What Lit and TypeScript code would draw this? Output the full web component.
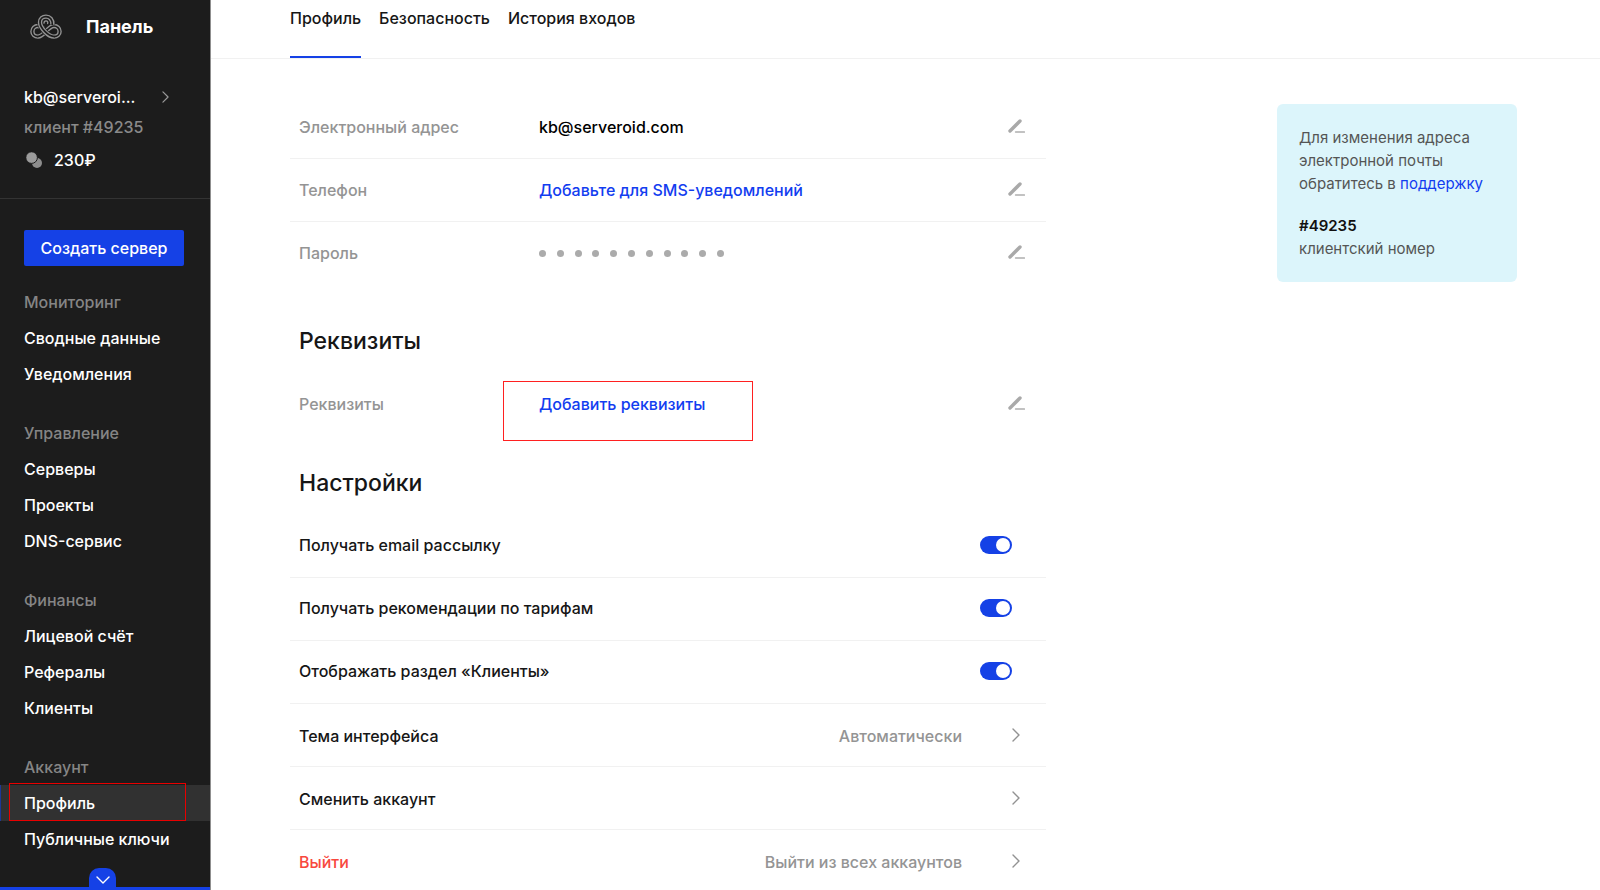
import { LitElement, html, css } from "lit";
import { customElement, state } from "lit/decorators.js";

interface NavGroup {
  title: string;
  items: string[];
}

const NAV: NavGroup[] = [
  { title: "Мониторинг", items: ["Сводные данные", "Уведомления"] },
  { title: "Управление", items: ["Серверы", "Проекты", "DNS-сервис"] },
  { title: "Финансы", items: ["Лицевой счёт", "Рефералы", "Клиенты"] },
  { title: "Аккаунт", items: ["Профиль", "Публичные ключи"] },
];

// A looped ribbon: every strand is a wide grey stroke with a dark core,
// so it reads as two parallel lines.
const logo = html`<svg class="logo" viewBox="0 0 32 25" aria-hidden="true" fill="none">
  <path d="M13.2 14.6 C11.8 12.8 10 12 8 12 C4.8 12 2.4 14.4 2.4 17.4 C2.4 20.4 4.8 22.6 8 22.6" stroke="#939393" stroke-width="4.4" />
  <path d="M13.8 15.2 C11.8 12.8 10 12 8 12 C4.8 12 2.4 14.4 2.4 17.4 C2.4 20.4 4.8 22.6 8 22.6" stroke="#1c1c1c" stroke-width="1.7" />
  <path d="M8 22.6 C14.4 22.6 17.6 12 24 12 C27.2 12 29.6 14.4 29.6 17.4 C29.6 20.4 27.2 22.6 24 22.6" stroke="#939393" stroke-width="4.4" />
  <path d="M7.6 22.6 C14.4 22.6 17.6 12 24 12 C27.2 12 29.6 14.4 29.6 17.4 C29.6 20.4 27.2 22.6 24 22.6" stroke="#1c1c1c" stroke-width="1.7" />
  <path d="M22.4 10.6 C22.8 5.6 19.8 2.6 16 2.6 C12.6 2.6 10 5 10 8.2 C10 13.6 18 22.6 24 22.6" stroke="#1c1c1c" stroke-width="5.6" />
  <path d="M22.4 10.6 C22.8 5.6 19.8 2.6 16 2.6 C12.6 2.6 10 5 10 8.2 C10 13.6 18 22.6 24 22.6" stroke="#939393" stroke-width="4.4" />
  <path d="M22.3 11 C22.8 5.6 19.8 2.6 16 2.6 C12.6 2.6 10 5 10 8.2 C10 13.6 18 22.6 24.6 22.6" stroke="#1c1c1c" stroke-width="1.7" />
  <path d="M14 9.2 C14 7.6 14.8 6.8 16 6.8 C17.4 6.8 18.2 8 17.6 9.6" stroke="#939393" stroke-width="1.3" stroke-linecap="round" />
</svg>`;

const chevron = html`<svg class="chevron" viewBox="0 0 8 14" aria-hidden="true">
  <path d="M1 1 L7 7 L1 13" fill="none" stroke="currentColor" stroke-width="1.4" stroke-linecap="round" stroke-linejoin="round" />
</svg>`;

const pencil = html`<svg class="pencil" viewBox="0 0 17 14" aria-hidden="true">
  <path d="M2 12 L12 2" fill="none" stroke="#a9a9a9" stroke-width="3.4" stroke-linecap="round" />
  <path d="M7.6 13 H16.4" fill="none" stroke="#aeaeae" stroke-width="1.6" stroke-linecap="round" />
</svg>`;

@customElement("app-sidebar")
export class AppSidebar extends LitElement {
  static styles = css`
    :host {
      display: block;
      position: relative;
      box-sizing: border-box;
      width: 211px;
      flex: none;
      overflow: hidden;
      background: #1c1c1c;
      border-right: 1px solid #8f8f8f;
      color: #fff;
      font-weight: 500;
      line-height: 24px;
    }
    a { color: inherit; text-decoration: none; }
    .brand {
      display: flex;
      align-items: center;
      gap: 24px;
      padding: 14px 0 0 30px;
      font-size: 18px;
      font-weight: 700;
    }
    .logo { width: 32px; height: 25px; }
    .account { padding: 46px 24px 26px; border-bottom: 1px solid #333; }
    .user { display: flex; align-items: center; height: 24px; }
    .name { flex: 1; white-space: nowrap; }
    .chevron { width: 7px; height: 12px; margin-right: 17px; color: #9a9a9a; }
    .client { padding-top: 6px; color: #8a8a8a; }
    .balance { display: flex; align-items: center; gap: 12px; padding: 9px 0 0 2px; }
    .coins { width: 16px; height: 16px; }
    .create {
      display: block;
      width: 160px;
      height: 36px;
      margin: 31px 0 24px 24px;
      padding: 0;
      border: 0;
      border-radius: 2px;
      background: #1541e6;
      color: #fff;
      font: inherit;
      cursor: pointer;
    }
    .group { padding-bottom: 29px; }
    .title { margin: 0 0 6px; padding-left: 24px; font-size: 16px; font-weight: 500; color: #858585; }
    .items { margin: 0; padding: 0; list-style: none; }
    .item { position: relative; }
    .link { display: block; padding: 6px 0 6px 23px; border-left: 1px solid transparent; }
    .current { background: #313131; border-left-color: #1d3797; }
    .mark {
      position: absolute;
      inset: -2px 24px 0 9px;
      border: 1px solid #e80000;
      pointer-events: none;
    }
    .more {
      position: absolute;
      inset: auto 0 0 0;
      display: flex;
      justify-content: center;
      padding-right: 5px;
      border-bottom: 3px solid #1541e6;
    }
    .down {
      display: grid;
      place-items: center;
      width: 27px;
      height: 19px;
      padding: 4px 0 0;
      border: 0;
      border-radius: 10px 10px 0 0;
      background: #1541e6;
      cursor: pointer;
    }
    .arrow { width: 14px; height: 8px; }
  `;

  render() {
    return html`
      <div class="brand">${logo}<span>Панель</span></div>
      <div class="account">
        <a class="user" href="#account"><span class="name">kb@serveroi...</span>${chevron}</a>
        <div class="client">клиент #49235</div>
        <div class="balance">
          <svg class="coins" viewBox="0 0 16 16" aria-hidden="true">
            <circle cx="11" cy="11" r="5" fill="#8d8d8d" />
            <circle cx="5.6" cy="5.6" r="5.8" fill="#9b9b9b" stroke="#1c1c1c" stroke-width="1" />
          </svg>
          <span>230₽</span>
        </div>
      </div>
      <button class="create" type="button">Создать сервер</button>
      <nav>
        ${NAV.map(
          (g) => html`<section class="group">
            <h2 class="title">${g.title}</h2>
            <ul class="items">
              ${g.items.map((name) => {
                const current = name === "Профиль";
                return html`<li class="item">
                  <a class="link ${current ? "current" : ""}" href="#nav">${name}</a>
                  ${current ? html`<span class="mark"></span>` : ""}
                </li>`;
              })}
            </ul>
          </section>`
        )}
      </nav>
      <div class="more">
        <button class="down" type="button" aria-label="Ещё">
          <svg class="arrow" viewBox="0 0 14 8" aria-hidden="true">
            <path d="M1 1 L7 7 L13 1" fill="none" stroke="#fff" stroke-width="1.4" stroke-linecap="round" stroke-linejoin="round" />
          </svg>
        </button>
      </div>
    `;
  }
}

@customElement("app-root")
export class AppRoot extends LitElement {
  @state() private settings = [
    { id: "mail", label: "Получать email рассылку", on: true },
    { id: "tips", label: "Получать рекомендации по тарифам", on: true },
    { id: "clients", label: "Отображать раздел «Клиенты»", on: true },
  ];

  static styles = css`
    :host {
      display: flex;
      height: 100vh;
      overflow: hidden;
      background: #fff;
      color: #161616;
      font: 500 16px/24px Inter, "Open Sans", sans-serif;
    }
    a { color: #123df0; text-decoration: none; }
    .page { flex: 1; min-width: 0; overflow: hidden; }
    .tabs {
      display: flex;
      gap: 18px;
      padding-left: 79px;
      border-bottom: 1px solid #f1f1f1;
    }
    .tab { padding: 6px 0 26px; border-bottom: 2px solid transparent; color: #161616; }
    .active { border-bottom-color: #1541e6; }
    .body {
      display: flex;
      justify-content: space-between;
      align-items: flex-start;
      gap: 40px;
      padding: 37px 83px 0 79px;
    }
    .column { flex: 0 1 756px; min-width: 0; }
    .profile { margin-bottom: 43px; }
    .details { margin-bottom: 34px; }
    .heading { margin: 0 0 18px; padding-left: 9px; font-size: 23px; line-height: 28px; font-weight: 500; }
    .row {
      position: relative;
      display: flex;
      align-items: center;
      box-sizing: border-box;
      height: 63px;
      padding: 0 21px 0 9px;
      border-bottom: 1px solid #f1f1f1;
      color: #161616;
    }
    .row:last-child { height: 62px; border-bottom: 0; }
    .key { width: 240px; color: #949494; }
    .value { flex: 1; color: #000; }
    .dots { display: flex; justify-content: space-between; width: 185px; margin-right: auto; }
    .dot { width: 7px; height: 7px; border-radius: 50%; background: #ababab; }
    .edit { display: flex; padding: 0 0 3px; border: 0; background: none; cursor: pointer; }
    .pencil { width: 17px; height: 14px; }
    .mark {
      position: absolute;
      inset: 8px 293px -6px 213px;
      border: 1px solid #ff2020;
      pointer-events: none;
    }
    .setting { padding: 0 34px 2px 9px; }
    .name { flex: 1; }
    .toggle {
      appearance: none;
      width: 32px;
      height: 18px;
      margin: 0;
      padding: 2px;
      border-radius: 9px;
      background: #c4c4c4;
      cursor: pointer;
    }
    .toggle::before {
      content: "";
      display: block;
      width: 14px;
      height: 14px;
      border-radius: 50%;
      background: #fff;
    }
    .toggle:checked { background: #1541e6; }
    .toggle:checked::before { margin-left: auto; }
    .action { padding: 2px 26px 0 9px; }
    .hint { margin-right: 50px; color: #949494; }
    .chevron { width: 8px; height: 14px; margin-bottom: 2px; color: #929292; }
    .danger { color: #f8483d; }
    .card {
      box-sizing: border-box;
      flex: none;
      width: 240px;
      margin-top: 8px;
      padding: 22px;
      border-radius: 6px;
      background: #dcf5fb;
      color: #555;
      font-size: 15px;
      line-height: 23px;
      font-weight: 400;
    }
    .note { margin: 0 0 19px; }
    .number { display: block; color: #111; font-weight: 600; }
  `;

  private flip(id: string) {
    this.settings = this.settings.map((s) => (s.id === id ? { ...s, on: !s.on } : s));
  }

  private edit(label: string) {
    return html`<button class="edit" type="button" aria-label=${"Изменить: " + label}>${pencil}</button>`;
  }

  render() {
    return html`
      <app-sidebar></app-sidebar>
      <main class="page">
        <nav class="tabs">
          <a class="tab active" href="#profile">Профиль</a>
          <a class="tab" href="#security">Безопасность</a>
          <a class="tab" href="#history">История входов</a>
        </nav>
        <div class="body">
          <div class="column">
            <section class="profile">
              <div class="row">
                <span class="key">Электронный адрес</span>
                <span class="value">kb@serveroid.com</span>
                ${this.edit("Электронный адрес")}
              </div>
              <div class="row">
                <span class="key">Телефон</span>
                <span class="value"><a href="#phone">Добавьте для SMS-уведомлений</a></span>
                ${this.edit("Телефон")}
              </div>
              <div class="row">
                <span class="key">Пароль</span>
                <span class="dots">${Array.from({ length: 11 }, () => html`<i class="dot"></i>`)}</span>
                ${this.edit("Пароль")}
              </div>
            </section>

            <h2 class="heading">Реквизиты</h2>
            <section class="details">
              <div class="row">
                <span class="key">Реквизиты</span>
                <span class="value"><a href="#details">Добавить реквизиты</a></span>
                ${this.edit("Реквизиты")}
                <span class="mark"></span>
              </div>
            </section>

            <h2 class="heading">Настройки</h2>
            <section>
              ${this.settings.map(
                (s) => html`<div class="row setting">
                  <label class="name" for=${s.id}>${s.label}</label>
                  <input class="toggle" type="checkbox" id=${s.id} .checked=${s.on} @change=${() => this.flip(s.id)} />
                </div>`
              )}
              <a class="row action" href="#theme">
                <span class="name">Тема интерфейса</span>
                <span class="hint">Автоматически</span>
                ${chevron}
              </a>
              <a class="row action" href="#switch">
                <span class="name">Сменить аккаунт</span>
                ${chevron}
              </a>
              <a class="row action" href="#logout">
                <span class="name danger">Выйти</span>
                <span class="hint">Выйти из всех аккаунтов</span>
                ${chevron}
              </a>
            </section>
          </div>

          <aside class="card">
            <p class="note">
              Для изменения адреса электронной почты обратитесь в <a href="#support">поддержку</a>
            </p>
            <span class="number">#49235</span>
            <span>клиентский номер</span>
          </aside>
        </div>
      </main>
    `;
  }
}
